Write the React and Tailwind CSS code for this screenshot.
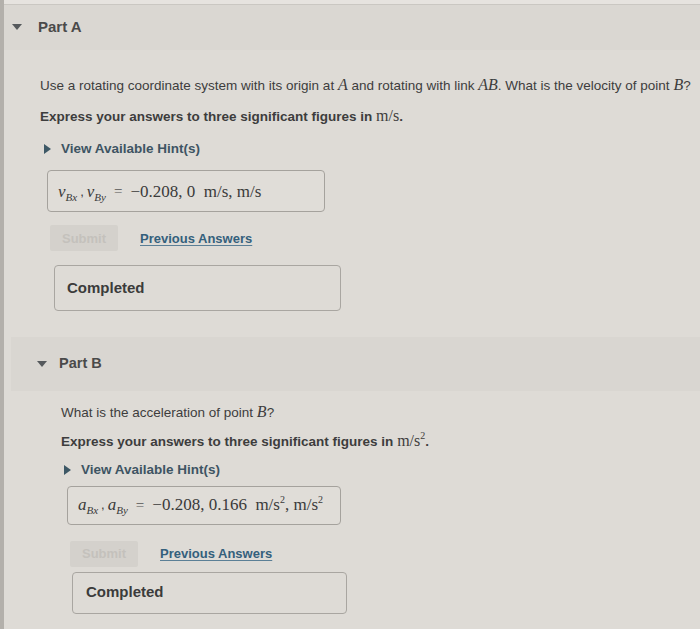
import React from 'react';

const sans = { fontFamily: '"Liberation Sans", Arial, sans-serif' };
const serif = { fontFamily: '"Liberation Serif", "DejaVu Serif", serif' };

const DownArrow = ({ className = '' }) => (
  <svg width="10" height="7" viewBox="0 0 10 7" className={className}>
    <path d="M0 0 L10 0 L5 6 Z" fill="#55595c" />
  </svg>
);

const RightArrow = () => (
  <svg width="7" height="10" viewBox="0 0 7 10">
    <path d="M0 0 L7 5 L0 10 Z" fill="#3d5866" />
  </svg>
);

const M = ({ children }) => (
  <span style={serif} className="italic text-[16px]">{children}</span>
);

const Sub = ({ base, sub }) => (
  <span style={serif} className="whitespace-nowrap">
    <span className="italic text-[17px]">{base}</span>
    <span className="italic text-[11px] relative top-[4px]">{sub}</span>
  </span>
);

// superscript 2
const Sq = () => (
  <span className="text-[10px] relative -top-[7px] align-baseline">2</span>
);

const Answer = ({ children, className = '' }) => (
  <div
    className={`flex items-center border border-[#a5a29d] rounded-[4px] bg-[#e0ddd8] text-[#3a3a3a] ${className}`}
  >
    {children}
  </div>
);

const Actions = ({ className = '' }) => (
  <div className={`flex items-center ${className}`}>
    <div className="w-[68px] h-[26px] bg-[#d4d1cc] rounded-[2px] flex items-center justify-center text-[13px] text-[#c4c1bc] font-semibold">
      Submit
    </div>
    <span className="ml-[22px] text-[13px] font-bold text-[#34607c] underline decoration-[#5b7f96] underline-offset-2">
      Previous Answers
    </span>
  </div>
);

const Completed = ({ className = '' }) => (
  <div
    className={`flex items-center border border-[#a9a6a1] rounded-[4px] bg-[#dedbd6] text-[15px] font-bold text-[#3b3b3b] ${className}`}
  >
    Completed
  </div>
);

export default function App() {
  return (
    <div style={sans} className="w-[700px] h-[629px] overflow-hidden flex bg-[#dedbd6] text-[#3c3c3c]">
      <div className="w-[4px] bg-[#b3b0ab]" />
      <div className="flex-1 flex flex-col border-t-[4px] border-[#e6e3df]">
        {/* Part A header */}
        <div className="h-[46px] flex items-center bg-[#dad7d2] border-t border-[#cac7c2]">
          <DownArrow className="ml-[8px]" />
          <span className="ml-[16px] text-[15px] font-semibold text-[#4a4a4a]">Part A</span>
        </div>

        <div className="pl-[36px] pt-[23px]">
          <p className="text-[13.5px] text-[#3d3d3d]">
            Use a rotating coordinate system with its origin at <M>A</M> and rotating with link <M>AB</M>. What is the velocity of point <M>B</M>?
          </p>
          <p className="mt-[7px] text-[13.5px] font-bold text-[#3d3d3d]">
            Express your answers to three significant figures in <span style={serif} className="font-normal text-[16px]">m/s</span>.
          </p>
          <div className="mt-[11px] ml-[4px] flex items-center gap-[10px]">
            <RightArrow />
            <span className="text-[13.5px] font-bold text-[#3d5463]">View Available Hint(s)</span>
          </div>

          <Answer className="mt-[11px] ml-[7px] w-[278px] h-[42px] pl-[10px]">
            <Sub base="v" sub="Bx" />
            <span className="text-[13px] mx-[3px]">,</span>
            <Sub base="v" sub="By" />
            <span style={serif} className="mx-[8px] text-[15px] text-[#555]">=</span>
            <span style={serif} className="text-[17px] whitespace-nowrap">−0.208, 0&nbsp;&nbsp;m/s, m/s</span>
          </Answer>

          <Actions className="mt-[13px] ml-[10px]" />

          <Completed className="mt-[14px] ml-[14px] w-[287px] h-[46px] pl-[12px]" />
        </div>

        {/* Part B header */}
        <div className="mt-[26px] ml-[7px] h-[54px] flex items-center bg-[#d9d6d1]">
          <DownArrow className="ml-[26px]" />
          <span className="ml-[12px] text-[14.5px] font-semibold text-[#4a4a4a]">Part B</span>
        </div>

        <div className="pl-[57px] pt-[9px]">
          <p className="text-[13.5px] text-[#3d3d3d]">
            What is the acceleration of point <M>B</M>?
          </p>
          <p className="mt-[5px] text-[13.5px] font-bold text-[#3d3d3d]">
            Express your answers to three significant figures in{' '}
            <span style={serif} className="font-normal text-[16px]">m/s<Sq /></span>.
          </p>
          <div className="mt-[7px] ml-[3px] flex items-center gap-[10px]">
            <RightArrow />
            <span className="text-[13.5px] font-bold text-[#3d5463]">View Available Hint(s)</span>
          </div>

          <Answer className="mt-[5px] ml-[6px] w-[274px] h-[39px] pl-[10px]">
            <Sub base="a" sub="Bx" />
            <span className="text-[13px] mx-[3px]">,</span>
            <Sub base="a" sub="By" />
            <span style={serif} className="mx-[8px] text-[15px] text-[#555]">=</span>
            <span style={serif} className="text-[17px] whitespace-nowrap">
              −0.208, 0.166&nbsp;&nbsp;m/s<Sq />, m/s<Sq />
            </span>
          </Answer>

          <Actions className="mt-[16px] ml-[9px]" />

          <Completed className="mt-[5px] ml-[11px] w-[275px] h-[42px] pl-[13px]" />
        </div>
      </div>
    </div>
  );
}
